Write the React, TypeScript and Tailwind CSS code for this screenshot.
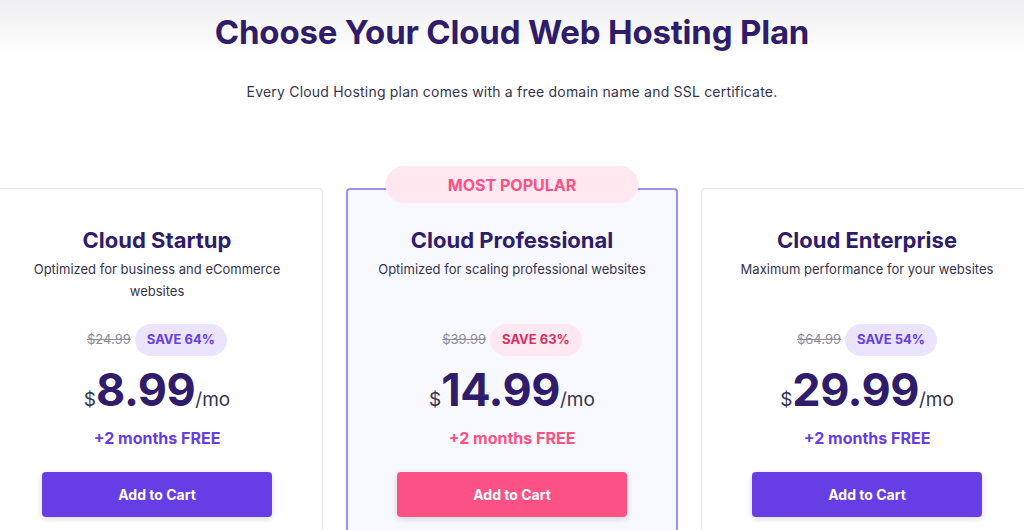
const plans = [
  {
    name: "Cloud Startup",
    desc: "Optimized for business and eCommerce websites",
    old: "$24.99",
    save: "SAVE 64%",
    price: "8.99",
    popular: false,
  },
  {
    name: "Cloud Professional",
    desc: "Optimized for scaling professional websites",
    old: "$39.99",
    save: "SAVE 63%",
    price: "14.99",
    popular: true,
  },
  {
    name: "Cloud Enterprise",
    desc: "Maximum performance for your websites",
    old: "$64.99",
    save: "SAVE 54%",
    price: "29.99",
    popular: false,
  },
];

type Plan = (typeof plans)[number];

function PlanCard({ plan }: { plan: Plan }) {
  const pop = plan.popular;
  return (
    <div
      className={
        pop
          ? "relative w-[332px] shrink-0 rounded-[4px] border-2 border-[#9d93ec] bg-[#f8f8ff] px-6 pt-[36px] pb-10"
          : "relative w-[332px] shrink-0 rounded-[4px] border border-[#e6e6ec] bg-white px-6 pt-[37px] pb-10"
      }
    >
      {pop && (
        <div className="absolute -top-[24px] left-1/2 flex h-[37px] w-[253px] -translate-x-1/2 items-center justify-center rounded-full bg-[#ffe8ef] text-[16px] font-bold text-[#fc5185]">
          MOST POPULAR
        </div>
      )}
      <div className="flex flex-col items-center text-center">
        <h3 className="text-[22px] leading-[28px] font-bold text-[#2f1c6a]">
          {plan.name}
        </h3>
        <p className="mt-[4px] h-[66px] text-[13px] leading-[22px] text-[#36344d]">
          {plan.desc}
        </p>
        <div className="flex items-center gap-1">
          <span className="text-[13px] text-[#8c8c9a] line-through">
            {plan.old}
          </span>
          <span
            className={
              pop
                ? "rounded-full bg-[#ffe8ef] px-3 py-[6px] text-[13px] font-bold text-[#d63163]"
                : "rounded-full bg-[#ebe4ff] px-3 py-[6px] text-[13px] font-bold text-[#673de6]"
            }
          >
            {plan.save}
          </span>
        </div>
        <div className="mt-[6px] flex items-baseline text-[#2f1c6a]">
          <span className="text-[19px] text-[#36344d]">$</span>
          <span className="text-[45px] leading-[56px] font-bold tracking-[-0.5px]">
            {plan.price}
          </span>
          <span className="text-[19px] text-[#36344d]">/mo</span>
        </div>
        <div
          className={
            pop
              ? "mt-[8px] text-[16px] font-bold text-[#fc5185]"
              : "mt-[8px] text-[16px] font-bold text-[#673de6]"
          }
        >
          +2 months FREE
        </div>
        <button
          className={
            pop
              ? "mt-[22px] h-[45px] w-[230px] rounded-[4px] bg-[#fc5185] text-[14px] font-bold text-white shadow-[0_2px_6px_rgba(0,0,0,0.15)]"
              : "mt-[22px] h-[45px] w-[230px] rounded-[4px] bg-[#673de6] text-[14px] font-bold text-white shadow-[0_2px_6px_rgba(0,0,0,0.15)]"
          }
        >
          Add to Cart
        </button>
      </div>
    </div>
  );
}

export default function App() {
  return (
    <div className="h-[530px] w-[1024px] overflow-hidden bg-white font-['Inter',sans-serif]">
      <div className="bg-gradient-to-b from-[#efeff1] to-white pt-[10px]">
        <h1 className="text-center text-[33px] leading-[44px] font-bold tracking-[-0.2px] text-[#2f1c6a]">
          Choose Your Cloud Web Hosting Plan
        </h1>
      </div>
      <p className="mt-[27px] text-center text-[14px] tracking-[0.2px] text-[#36344d]">
        Every Cloud Hosting plan comes with a free domain name and SSL certificate.
      </p>
      <div className="mt-[86px] flex justify-center gap-[23px]">
        {plans.map((p) => (
          <PlanCard key={p.name} plan={p} />
        ))}
      </div>
    </div>
  );
}
